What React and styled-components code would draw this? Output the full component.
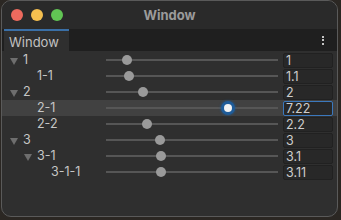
import React from 'react'
import styled, {createGlobalStyle} from "styled-components";

const GlobalStyle = createGlobalStyle`
  html, body {
    margin: 0;
    padding: 0;
    background: #2b2723;
    font-family: Inter, "Noto Sans", sans-serif;
  }
`;

const rows = [
  {name: "1", level: 0, folder: true, value: 1, text: "1"},
  {name: "1-1", level: 1, value: 1.1, text: "1.1"},
  {name: "2", level: 0, folder: true, value: 2, text: "2"},
  {name: "2-1", level: 1, value: 7.22, text: "7.22", active: true},
  {name: "2-2", level: 1, value: 2.2, text: "2.2"},
  {name: "3", level: 0, folder: true, value: 3, text: "3"},
  {name: "3-1", level: 1, folder: true, value: 3.1, text: "3.1"},
  {name: "3-1-1", level: 2, value: 3.11, text: "3.11"},
];

export default function App() {
  return (
    <>
      <GlobalStyle />
      <Window>
        <TitleBar>
          <Lights>
            <Light color="#ed6a5e" />
            <Light color="#f5bf4f" />
            <Light color="#61c554" />
          </Lights>
          <Title>Window</Title>
        </TitleBar>
        <TabStrip>
          <Tab>Window</Tab>
          <Kebab>
            <span /><span /><span />
          </Kebab>
        </TabStrip>
        <Content>
          {rows.map((row) => (
            <Row key={row.name} active={row.active}>
              <Label level={row.level}>
                {row.folder ? <Arrow /> : <ArrowSpace />}
                {row.name}
              </Label>
              <Slider>
                <Track />
                <Thumb active={row.active} style={{left: `${row.value * 10}%`}} />
              </Slider>
              <Field active={row.active}>{row.text}</Field>
            </Row>
          ))}
        </Content>
      </Window>
    </>
  );
}

const Window = styled.div`
  position: relative;
  margin-left: 1px;
  width: 337px;
  height: 217px;
  box-sizing: border-box;
  border: 1px solid #5a5a5a;
  border-radius: 10px;
  background: #2f2f2f;
  overflow: hidden;
  display: flex;
  flex-direction: column;
`;

const TitleBar = styled.div`
  height: 28px;
  flex: none;
  background: #2a2a2a;
  display: flex;
  align-items: center;
  justify-content: center;
  position: relative;
`;

const Lights = styled.div`
  position: absolute;
  left: 9px;
  top: 8px;
  display: flex;
  gap: 8px;
`;

const Light = styled.div`
  width: 12px;
  height: 12px;
  border-radius: 50%;
  background: ${(p) => p.color};
`;

const Title = styled.div`
  color: #9b9b9b;
  font-weight: bold;
  font-size: 13px;
  padding-bottom: 1px;
`;

const TabStrip = styled.div`
  height: 22px;
  flex: none;
  background: #1f1f1f;
  display: flex;
  align-items: stretch;
  justify-content: space-between;
  padding-left: 2px;
  padding-right: 13px;
`;

const Tab = styled.div`
  width: 65px;
  box-sizing: border-box;
  border-top: 2px solid #3a6fa6;
  background: #2f2f2f;
  color: #c2c2c2;
  font-size: 13px;
  padding: 2px 0 0 5px;
  display: flex;
  align-items: center;
`;

const Kebab = styled.div`
  display: flex;
  flex-direction: column;
  justify-content: center;
  gap: 1.5px;
  span {
    width: 2px;
    height: 2px;
    background: #c4c4c4;
  }
`;

const Content = styled.div`
  flex: 1;
  padding-top: 1px;
`;

const Row = styled.div`
  height: 16px;
  display: grid;
  grid-template-columns: 99px 172px 50px;
  column-gap: 5px;
  align-items: center;
  background: ${(p) => (p.active ? "#414141" : "transparent")};
`;

const Label = styled.div`
  display: flex;
  align-items: center;
  color: #c6c6c6;
  font-size: 12.5px;
  padding-left: ${(p) => 8 + p.level * 14}px;
  line-height: 16px;
`;

const Arrow = styled.span`
  width: 0;
  height: 0;
  border-left: 4.5px solid transparent;
  border-right: 4.5px solid transparent;
  border-top: 7px solid #6e6e6e;
  margin-right: 5px;
  margin-top: 2px;
`;

const ArrowSpace = styled.span`
  width: 13px;
`;

const Slider = styled.div`
  position: relative;
  height: 16px;
  margin: 0 5px;
`;

const Track = styled.div`
  position: absolute;
  left: -5px;
  right: -5px;
  top: 7px;
  height: 2px;
  background: #565656;
`;

const Thumb = styled.div`
  position: absolute;
  top: 8px;
  width: ${(p) => (p.active ? 8 : 10)}px;
  height: ${(p) => (p.active ? 8 : 10)}px;
  border-radius: 50%;
  transform: translate(-50%, -50%);
  background: ${(p) => (p.active ? "#f2f2f2" : "#9a9a9a")};
  box-shadow: ${(p) => (p.active ? "0 0 0 3px #1f5c99, 0 0 2px 4px rgba(31,92,153,0.4)" : "none")};
`;

const Field = styled.div`
  height: 15px;
  box-sizing: border-box;
  border: 1px solid ${(p) => (p.active ? "#3b78bd" : "#212121")};
  border-radius: 2px;
  background: #282828;
  color: #cdcdcd;
  font-size: 12.5px;
  line-height: 14px;
  padding-left: 2px;
  margin-top: 1px;
`;
